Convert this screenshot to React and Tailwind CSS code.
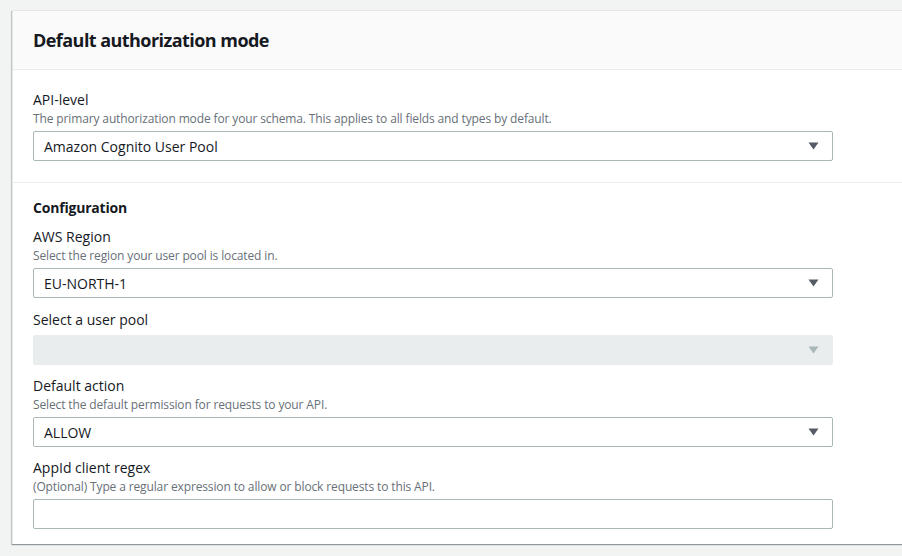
function Caret({ disabled = false }) {
  return (
    <svg width="11" height="8" viewBox="0 0 11 8" className="shrink-0">
      <path d="M0.5 0.5 H10.5 L5.5 7.5 Z" fill={disabled ? "#aab7b8" : "#545b64"} />
    </svg>
  );
}

function Field({ label, hint, children, className = "" }) {
  return (
    <div className={className}>
      <div className="text-[14px] leading-[22px] text-[#16191f]">{label}</div>
      {hint ? (
        <div className="text-[12px] leading-[16px] tracking-[-0.13px] text-[#687078]">{hint}</div>
      ) : null}
      <div className="mt-1">{children}</div>
    </div>
  );
}

function Select({ value, disabled = false }) {
  return (
    <div
      className={[
        "flex h-[30px] w-[800px] items-center justify-between rounded-[2px] border pl-[10px] pr-[13px] text-[14px] text-[#16191f]",
        disabled ? "border-[#eaeded] bg-[#eaeded]" : "border-[#aab7b8] bg-white",
      ].join(" ")}
    >
      <span>{value}</span>
      <Caret disabled={disabled} />
    </div>
  );
}

export default function App() {
  return (
    <div
      className="h-[556px] w-[902px] overflow-hidden bg-[#f2f3f3] pl-3 pt-[10px]"
      style={{ fontFamily: '"Open Sans", "Noto Sans", Arial, sans-serif' }}
    >
      <div className="w-[920px] border-l border-t border-[#e3e6e6] bg-white shadow-[0_1px_1px_0_rgba(0,28,36,0.3),-1px_1px_1px_0_rgba(0,28,36,0.15)]">
        <div className="flex h-[59px] items-center border-b border-[#eaeded] bg-[#fafafa] px-5">
          <h2 className="text-[18px] font-bold tracking-[-0.55px] text-[#16191f]">Default authorization mode</h2>
        </div>

        <div className="border-b border-[#eaeded] px-5 pb-[21px] pt-[19px]">
          <Field
            label="API-level"
            hint="The primary authorization mode for your schema. This applies to all fields and types by default."
          >
            <Select value="Amazon Cognito User Pool" />
          </Field>
        </div>

        <div className="px-5 pb-[15px] pt-[14px]">
          <h3 className="text-[14px] font-bold leading-[22px] tracking-[-0.2px] text-[#16191f]">Configuration</h3>
          <Field className="mt-[7px]" label="AWS Region" hint="Select the region your user pool is located in.">
            <Select value="EU-NORTH-1" />
          </Field>
          <Field className="mt-[11px]" label="Select a user pool">
            <Select value="" disabled />
          </Field>
          <Field
            className="mt-[10px]"
            label="Default action"
            hint="Select the default permission for requests to your API."
          >
            <Select value="ALLOW" />
          </Field>
          <Field
            className="mt-[10px]"
            label="AppId client regex"
            hint="(Optional) Type a regular expression to allow or block requests to this API."
          >
            <div className="h-[30px] w-[800px] rounded-[2px] border border-[#aab7b8] bg-white" />
          </Field>
        </div>
      </div>
    </div>
  );
}
